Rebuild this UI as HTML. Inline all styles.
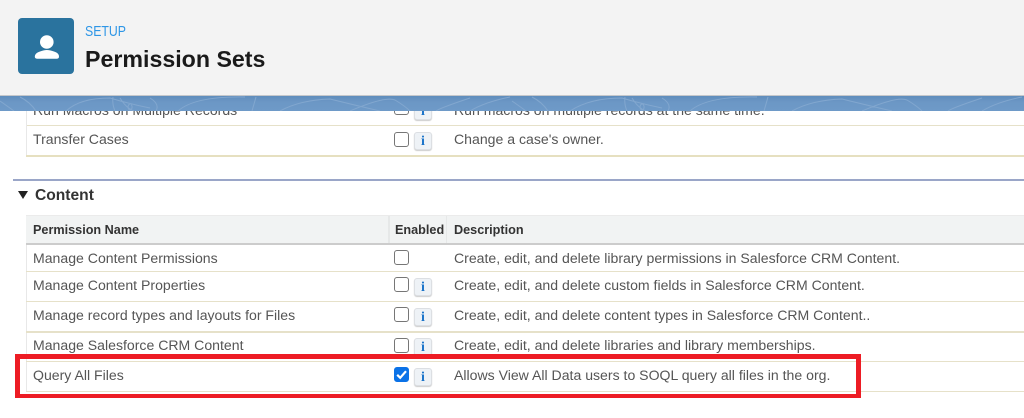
<!DOCTYPE html>
<html lang="en">
<head>
<meta charset="utf-8">
<title>Permission Sets</title>
<style>
html,body{margin:0;padding:0;background:#fff;}
body{position:relative;width:1024px;height:418px;overflow:hidden;font-family:"Liberation Sans",sans-serif;color:#555;filter:blur(.35px);}
div{position:absolute;box-sizing:border-box;}
.t{font-size:14.08px;line-height:16px;white-space:nowrap;color:#555;}
.h{font-size:12.65px;line-height:16px;white-space:nowrap;font-weight:bold;color:#333;}
.l{left:26px;width:998px;background:#e6e1c9;height:1px;}
.cb{left:394px;width:15px;height:15px;border:1.3px solid #767676;border-radius:3px;background:#fff;}
.ib{left:414px;width:18px;height:18px;border:1px solid #dcdfe3;border-radius:3px;background:#eef2f6;box-shadow:0 1px 1px #ccc;color:#1b74c9;font:bold 14px/17px "Liberation Serif",serif;text-align:center;}
</style>
</head>
<body>
<div class="t" style="left:33px;top:102px">Run Macros on Multiple Records</div>
<div class="cb" style="top:100px"></div>
<div class="ib" style="top:102px">i</div>
<div class="t" style="left:454px;top:102px">Run macros on multiple records at the same time.</div>
<div class="l" style="top:125px"></div>
<div style="left:26px;top:111px;width:1px;height:45px;background:#e8e8e8"></div>

<div class="t" style="left:33px;top:131px">Transfer Cases</div>
<div class="cb" style="top:132px"></div>
<div class="ib" style="top:132px">i</div>
<div class="t" style="left:454px;top:131px">Change a case's owner.</div>
<div class="l" style="top:155px;height:2px;background:#e6e0c0"></div>

<div style="left:13px;top:179px;width:1011px;height:2px;background:#9aa6c8"></div>
<div style="left:18px;top:191px;width:0;height:0;border-left:5.500px solid transparent;border-right:5.500px solid transparent;border-top:8px solid #222"></div>
<div style="left:35px;top:187px;font-size:15.6px;line-height:17px;font-weight:bold;color:#333;white-space:nowrap">Content</div>

<div style="left:26px;top:215px;width:998px;height:30px;background:#f1f3f3;border-top:1px solid #ebebeb;border-bottom:2px solid #ccc"></div>
<div style="left:388px;top:216px;width:2px;height:27px;background:#e6e8e8"></div>
<div style="left:446px;top:216px;width:1px;height:27px;background:#e6e8e8"></div>
<div class="h" style="left:33px;top:222px">Permission Name</div>
<div class="h" style="left:395px;top:222px">Enabled</div>
<div class="h" style="left:454px;top:222px">Description</div>

<div style="left:26px;top:245px;width:1px;height:147px;background:#e8e8e8"></div>

<div class="t" style="left:33px;top:250px">Manage Content Permissions</div>
<div class="cb" style="top:250px"></div>
<div class="t" style="left:454px;top:250px">Create, edit, and delete library permissions in Salesforce CRM Content.</div>
<div class="l" style="top:271px"></div>

<div class="t" style="left:33px;top:277px">Manage Content Properties</div>
<div class="cb" style="top:277px"></div>
<div class="ib" style="top:278px">i</div>
<div class="t" style="left:454px;top:277px">Create, edit, and delete custom fields in Salesforce CRM Content.</div>
<div class="l" style="top:301px"></div>

<div class="t" style="left:33px;top:307px">Manage record types and layouts for Files</div>
<div class="cb" style="top:307px"></div>
<div class="ib" style="top:308px">i</div>
<div class="t" style="left:454px;top:307px">Create, edit, and delete content types in Salesforce CRM Content..</div>
<div class="l" style="top:331px;height:2px"></div>

<div class="t" style="left:33px;top:337px">Manage Salesforce CRM Content</div>
<div class="cb" style="top:338px"></div>
<div class="ib" style="top:338px">i</div>
<div class="t" style="left:454px;top:337px">Create, edit, and delete libraries and library memberships.</div>
<div class="l" style="top:361px"></div>

<div class="t" style="left:33px;top:367px">Query All Files</div>
<div class="cb" style="top:367px;background:#0b72e7;border-color:#0b72e7">
<svg width="13" height="13" viewBox="0 0 13 13" style="position:absolute;left:0;top:0"><path d="M2.200 6.800 L5.200 9.800 L11 3.200" fill="none" stroke="#fff" stroke-width="2.200"/></svg>
</div>
<div class="ib" style="top:368px">i</div>
<div class="t" style="left:454px;top:367px">Allows View All Data users to SOQL query all files in the org.</div>
<div class="l" style="top:391px"></div>

<div style="left:15px;top:354px;width:846px;height:44px;border:5px solid #ed1c24;border-bottom-width:4px"></div>

<div style="left:0;top:96px;width:1024px;height:15px;background:linear-gradient(#5f8dbc,#6c97c5 40%,#6e9ac8);overflow:hidden">
<svg width="1024" height="15" viewBox="0 0 1024 15" style="position:absolute;left:0;top:0" fill="none" stroke="#82a7cf" stroke-width="1">
<path d="M0 5 Q10 12 14 15 M20 1 Q30 6 36 15 M66 15 Q80 2 110 2 Q130 8 150 12 M113 1 Q112 8 115 15 M120 2 Q126 12 134 15 M130 8 a2 3 0 1 0 .1 0 M150 2 Q160 8 156 15 M178 15 Q195 0 245 1 M256 1 L252 15 M280 15 Q300 4 330 3 Q350 8 380 15 M350 15 Q385 0 395 4 Q405 10 410 15 M470 2 Q440 12 436 15 M510 1 Q485 6 470 15"/>
<path d="M512 5 Q522 12 526 15 M532 1 Q542 6 548 15 M570 15 Q590 2 622 2 Q642 8 662 12 M625 1 Q624 8 627 15 M632 2 Q638 12 646 15 M642 8 a2 3 0 1 0 .1 0 M662 2 Q672 8 668 15 M690 15 Q707 0 757 1 M768 1 L764 15 M792 15 Q812 4 842 3 Q862 8 892 15 M862 15 Q897 0 907 4 Q917 10 922 15 M982 2 Q952 12 948 15 M1022 1 Q997 6 982 15"/>
</svg>
</div>

<div style="left:0;top:0;width:1024px;height:96px;background:#f3f3f3;border-bottom:1px solid #c4c7cb"></div>
<div style="left:18px;top:18px;width:56px;height:56px;background:#2a739e;border-radius:4px">
<svg width="56" height="56" viewBox="0 0 56 56" style="position:absolute;left:0;top:0"><circle cx="28.800" cy="24" r="6.800" fill="#fff"/><path d="M16.800 38.500 Q17 35 22 33.500 Q26 32 28.800 32 Q32 32 36 33.500 Q41 35 41 38.500 Q41 40.700 39 40.700 L19 40.700 Q16.800 40.700 16.800 38.500 Z" fill="#fff"/></svg>
</div>
<div style="left:85px;top:23px;font-size:15px;line-height:17px;color:#2e96e6;white-space:nowrap;transform:scaleX(.82);transform-origin:left center">SETUP</div>
<div style="left:85px;top:45px;font-size:23.2px;line-height:29px;font-weight:bold;color:#1a1a1a;white-space:nowrap">Permission Sets</div>
</body>
</html>
